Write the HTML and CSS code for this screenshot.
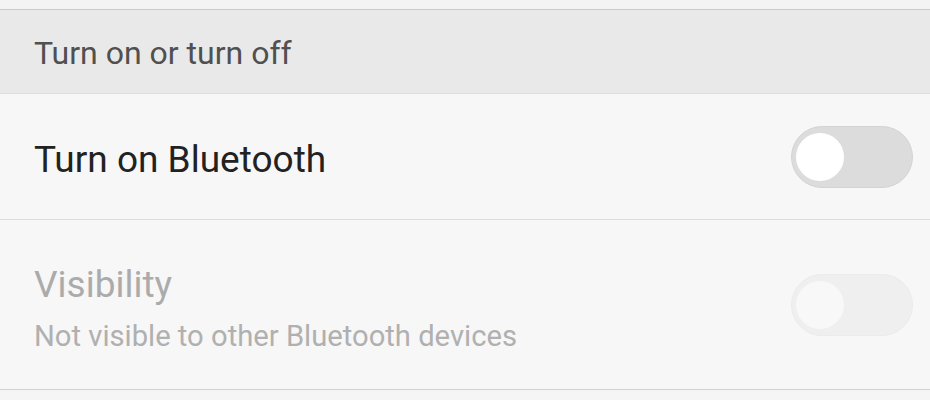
FILE: index.html
```html
<!DOCTYPE html>
<html>
<head>
<meta charset="utf-8">
<link rel="stylesheet" href="styles.css">
</head>
<body>
<div class="top"></div>
<div class="section">Turn on or turn off</div>
<div class="row row-main">
  <div class="title">Turn on Bluetooth</div>
  <div class="switch"><div class="knob"></div></div>
</div>
<div class="row row-sub disabled">
  <div class="texts">
    <div class="title">Visibility</div>
    <div class="summary">Not visible to other Bluetooth devices</div>
  </div>
  <div class="switch"><div class="knob"></div></div>
</div>
<div class="bottom"></div>
</body>
</html>
```
FILE: styles.css
```css
html, body { margin: 0; padding: 0; }
body {
  width: 930px;
  height: 400px;
  overflow: hidden;
  background: #f7f7f7;
  font-family: Roboto, "Noto Sans", sans-serif;
}
.top {
  height: 9px;
  background: #f3f3f3;
  border-bottom: 1px solid #c9c9c9;
}
.section {
  height: 84px;
  box-sizing: border-box;
  background: #e9e9e9;
  border-bottom: 1px solid #dedede;
  color: #505050;
  font-size: 32px;
  line-height: 38px;
  padding-left: 34px;
  display: flex;
  align-items: center;
  padding-top: 3px;
}
.row {
  display: flex;
  align-items: center;
  justify-content: space-between;
  padding: 0 17px 0 34px;
  box-sizing: border-box;
  border-bottom: 1px solid #dcdcdc;
  background: #f7f7f7;
}
.row-main { height: 126px; }
.row-main .title { padding-top: 6px; }
.row-sub { height: 170px; border-bottom-color: #d2d2d2; }
.title {
  font-size: 37px;
  line-height: 44px;
  color: #222222;
}
.summary {
  font-size: 29.2px;
  line-height: 34px;
  color: #b0b0b0;
  margin-top: 12px;
}
.disabled .title { color: #ababab; }
.texts { padding-top: 6px; }
.switch {
  width: 122px;
  height: 62px;
  box-sizing: border-box;
  border-radius: 31px;
  background: #dcdcdc;
  border: 1px solid #d4d4d4;
  display: flex;
  align-items: center;
  padding-left: 4px;
}
.knob {
  width: 48px;
  height: 48px;
  border-radius: 50%;
  background: #ffffff;
}
.disabled .switch {
  background: #efefef;
  border-color: #ebebeb;
}
.disabled .knob { background: #f8f8f8; }
.bottom { height: 10px; background: #f5f5f5; }
```
